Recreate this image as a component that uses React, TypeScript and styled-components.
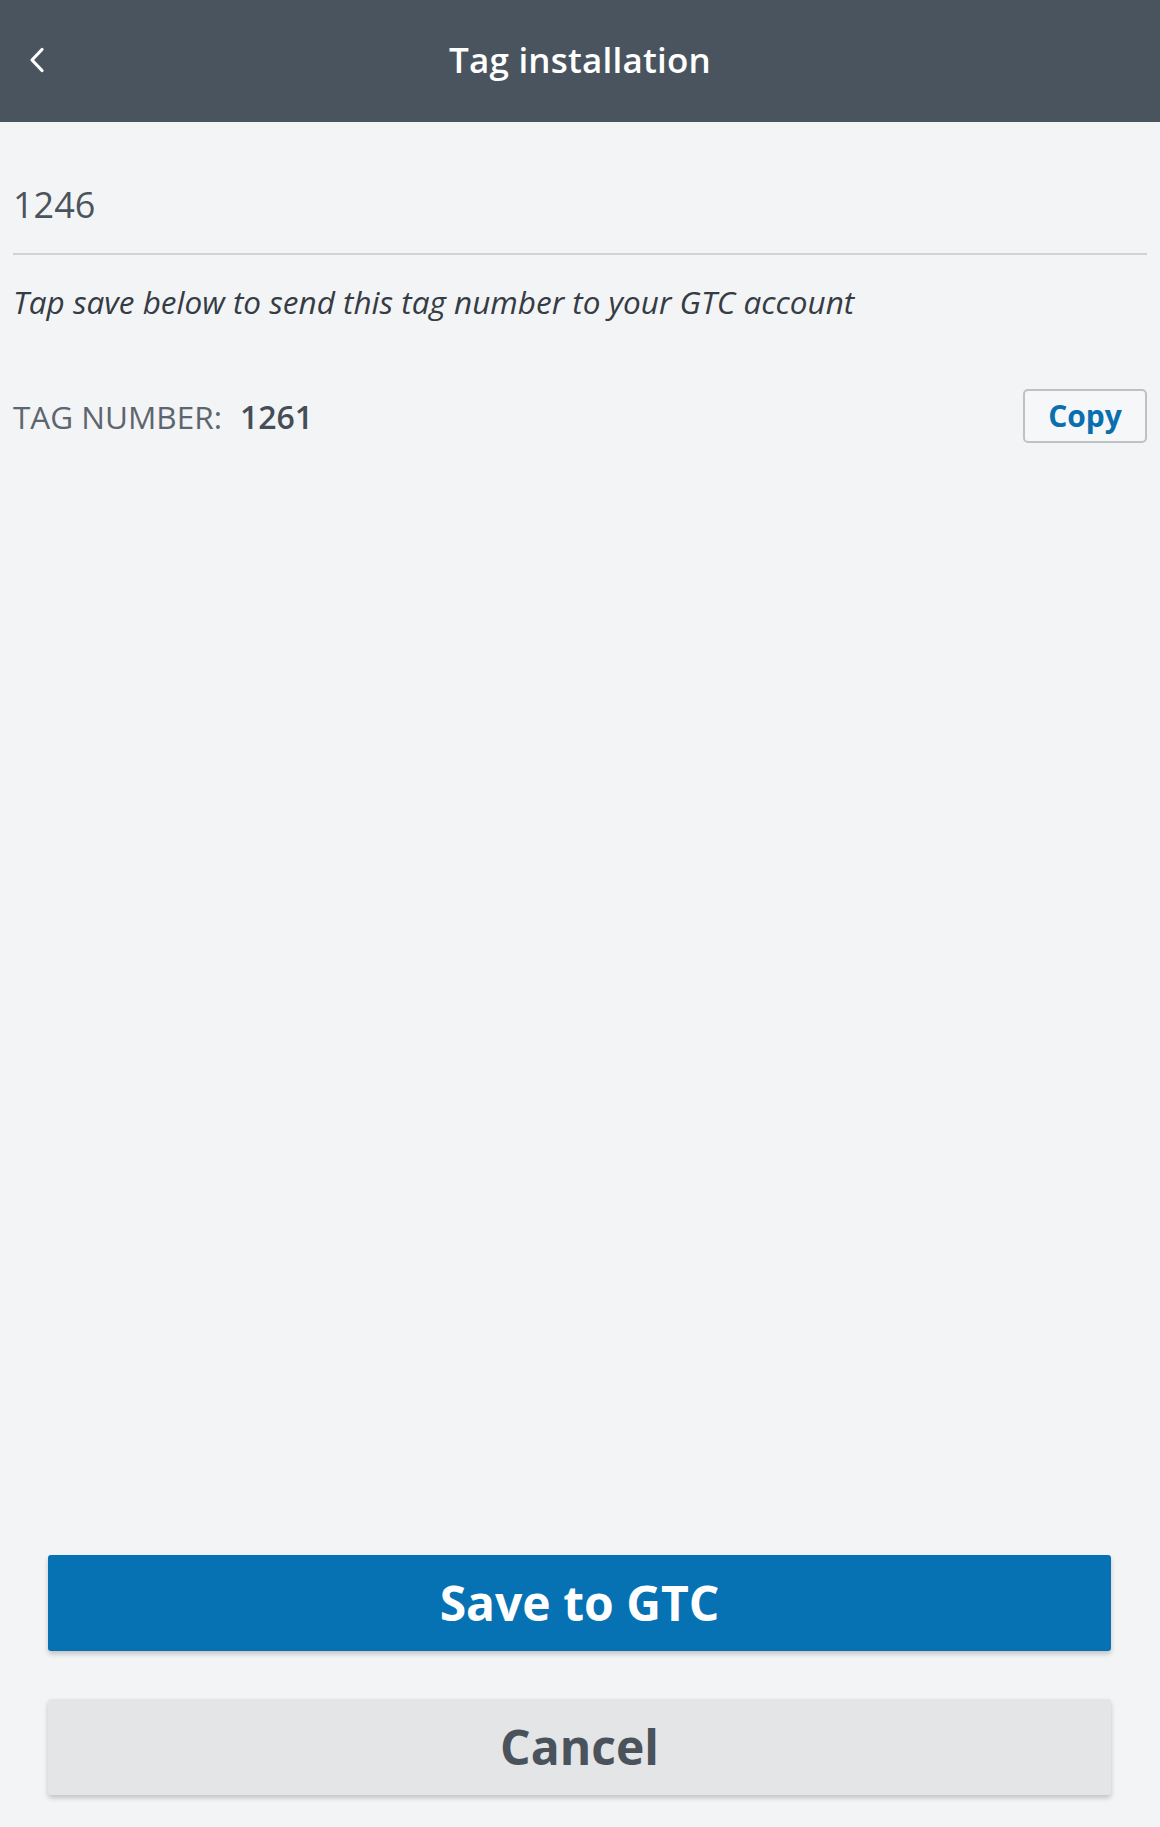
import React from "react";
import styled, { createGlobalStyle } from "styled-components";

const Global = createGlobalStyle`
  html, body, #root { height: 100%; }
  body {
    margin: 0;
    background: #f3f4f6;
    font-family: "Open Sans", "Noto Sans", sans-serif;
  }
`;

const Page = styled.div`
  min-height: 100%;
  display: flex;
  flex-direction: column;
  background: #f3f4f6;
`;

const Header = styled.header`
  height: 122px;
  background: #4a545e;
  display: grid;
  grid-template-columns: 1fr auto 1fr;
  align-items: center;
  padding: 0 29px;
  box-sizing: border-box;
`;

const BackButton = styled.button`
  justify-self: start;
  background: none;
  border: 0;
  padding: 0;
  margin-top: -3px;
  display: flex;
  cursor: pointer;
`;

const Title = styled.h1`
  margin: 0 0 4px;
  color: #ffffff;
  font-size: 35px;
  font-weight: 600;
  letter-spacing: 0.2px;
`;

const Content = styled.main`
  flex: 1;
  padding: 0 13px;
  display: flex;
  flex-direction: column;
`;

const Field = styled.div`
  margin-top: 58px;
  padding-bottom: 23px;
  border-bottom: 2px solid #d0d3d6;
  font-size: 36px;
  line-height: 50px;
  color: #4b535c;
`;

const Hint = styled.p`
  margin: 27px 0 0;
  font-size: 31.5px;
  line-height: 40px;
  font-style: italic;
  color: #353c44;
`;

const TagRow = styled.div`
  margin-top: 67px;
  display: flex;
  align-items: center;
  justify-content: space-between;
`;

const TagText = styled.div`
  font-size: 31.5px;
  display: flex;
  align-items: baseline;
  gap: 18px;
`;

const TagLabel = styled.span`
  color: #5d656e;
  font-weight: 400;
`;

const TagValue = styled.span`
  color: #454d56;
  font-weight: 600;
  font-size: 32px;
`;

const CopyButton = styled.button`
  width: 124px;
  height: 54px;
  box-sizing: border-box;
  border: 2px solid #bfc2c5;
  border-radius: 5px;
  background: #f6f7f8;
  color: #0a6fae;
  font-family: "Open Sans", sans-serif;
  font-weight: 700;
  font-size: 30px;
  padding: 0 0 2px;
  cursor: pointer;
`;

const Footer = styled.div`
  display: flex;
  flex-direction: column;
  gap: 48px;
  padding: 0 49px 32px 48px;
`;

const ActionButton = styled.button<{ $variant: "primary" | "secondary" }>`
  height: 96px;
  border: 0;
  border-radius: 3px;
  font-family: "Open Sans", sans-serif;
  font-weight: 700;
  font-size: 48px;
  padding: 0 0 2px;
  cursor: pointer;
  box-shadow: 0 3px 5px rgba(0, 0, 0, 0.2);
  background: ${(p) => (p.$variant === "primary" ? "#0772b3" : "#e4e5e7")};
  color: ${(p) => (p.$variant === "primary" ? "#ffffff" : "#4a525b")};
`;

export default function App() {
  return (
    <Page>
      <Global />
      <Header>
        <BackButton aria-label="Back">
          <svg width="16" height="26" viewBox="0 0 16 26" fill="none">
            <path
              d="M13 2.5 L3 13 L13 23.5"
              stroke="#ffffff"
              strokeWidth="3.2"
              strokeLinecap="round"
              strokeLinejoin="round"
            />
          </svg>
        </BackButton>
        <Title>Tag installation</Title>
        <span />
      </Header>
      <Content>
        <Field>1246</Field>
        <Hint>Tap save below to send this tag number to your GTC account</Hint>
        <TagRow>
          <TagText>
            <TagLabel>TAG NUMBER:</TagLabel>
            <TagValue>1261</TagValue>
          </TagText>
          <CopyButton>Copy</CopyButton>
        </TagRow>
      </Content>
      <Footer>
        <ActionButton $variant="primary">Save to GTC</ActionButton>
        <ActionButton $variant="secondary">Cancel</ActionButton>
      </Footer>
    </Page>
  );
}
